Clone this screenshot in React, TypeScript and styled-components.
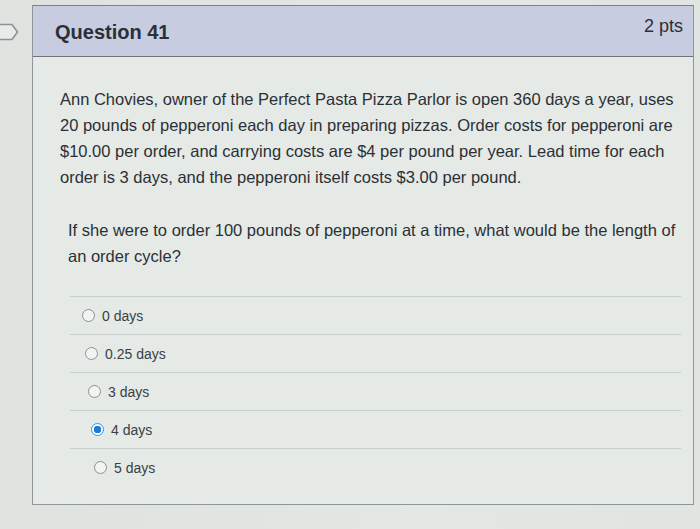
import styled, { createGlobalStyle } from "styled-components";

const Global = createGlobalStyle`
  html, body {
    margin: 0;
    padding: 0;
    background: #dde2de;
  }
  body {
    font-family: "Liberation Sans", Arial, sans-serif;
    color: #2d3b45;
  }
`;

const answers = ["0 days", "0.25 days", "3 days", "4 days", "5 days"];
const picked = 3;

export default function App() {
  return (
    <>
      <Global />
      <Page>
        <Flag>
          <svg width="22" height="18" viewBox="0 0 22 18">
            <path
              d="M0 1.5 H14 L19.5 9 L14 16.5 H0"
              fill="#e9ebe8"
              stroke="#8d9296"
              strokeWidth="1.6"
            />
          </svg>
        </Flag>
        <Card>
          <Header>
            <Title>Question 41</Title>
            <Points>2 pts</Points>
          </Header>
          <Body>
            <Para>
              Ann Chovies, owner of the Perfect Pasta Pizza Parlor is open 360
              days a year, uses 20 pounds of pepperoni each day in preparing
              pizzas. Order costs for pepperoni are $10.00 per order, and
              carrying costs are $4 per pound per year. Lead time for each order
              is 3 days, and the pepperoni itself costs $3.00 per pound.
            </Para>
            <Para $indent={8}>
              If she were to order 100 pounds of pepperoni at a time, what would
              be the length of an order cycle?
            </Para>
            <Answers>
              {answers.map((a, i) => (
                <Answer key={a} $shift={i * 3}>
                  <Radio $on={i === picked} />
                  <AnswerText>{a}</AnswerText>
                </Answer>
              ))}
            </Answers>
          </Body>
        </Card>
      </Page>
    </>
  );
}

const Page = styled.div`
  position: relative;
  width: 700px;
  height: 529px;
  padding: 5px 6px 0 32px;
  box-sizing: border-box;
  overflow: hidden;
  background: linear-gradient(90deg, #dfe2df 0%, #e3e8e4 60%, #e1e5e2 100%);
`;

const Flag = styled.div`
  position: absolute;
  left: -2px;
  top: 23px;
`;

const Card = styled.div`
  border: 1px solid #8f9598;
  border-top-color: #7c8186;
  background: #e5eae6;
  height: 500px;
  box-sizing: border-box;
`;

const Header = styled.div`
  height: 50px;
  background: #c7cce0;
  border-bottom: 1px solid #6f7479;
  display: flex;
  align-items: center;
  justify-content: space-between;
  padding: 0 10px 0 22px;
`;

const Title = styled.h2`
  margin: 0;
  font-size: 20px;
  font-weight: 700;
  color: #2a2f38;
  padding-top: 3px;
`;

const Points = styled.span`
  font-size: 18px;
  color: #2a2f38;
  margin-bottom: 10px;
`;

const Body = styled.div`
  padding: 29px 12px 0 27px;
`;

const Para = styled.p<{ $indent?: number }>`
  margin: 0 0 27px ${({ $indent }) => $indent ?? 0}px;
  font-size: 16.5px;
  line-height: 26px;
  color: #2b3036;
  max-width: 630px;
`;

const Answers = styled.div`
  margin: 10px 0 0 10px;
  display: flex;
  flex-direction: column;
`;

const Answer = styled.div<{ $shift: number }>`
  display: flex;
  align-items: center;
  gap: 7px;
  height: 37px;
  border-top: 1px solid #c9cfcc;
  padding-left: ${({ $shift }) => 12 + $shift}px;
`;

const Radio = styled.span<{ $on: boolean }>`
  width: 13px;
  height: 13px;
  border-radius: 50%;
  border: 1px solid ${({ $on }) => ($on ? "#3b8fd9" : "#8a9096")};
  background: ${({ $on }) =>
    $on ? "radial-gradient(circle, #1f7ad0 0 3.5px, #ffffff 4px)" : "#f2f4f2"};
  box-sizing: border-box;
`;

const AnswerText = styled.span`
  font-size: 14px;
  color: #3a3f45;
`;
